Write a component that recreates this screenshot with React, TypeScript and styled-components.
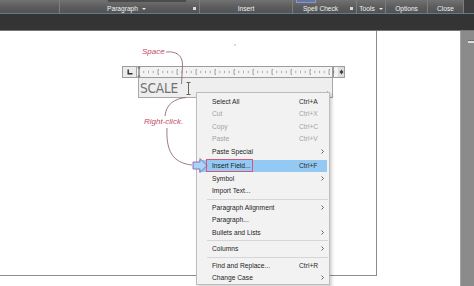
import React from "react";
import styled, { createGlobalStyle } from "styled-components";

const Global = createGlobalStyle`
  html, body { margin: 0; padding: 0; background: #ffffff; overflow: hidden; }
  body { width: 474px; height: 286px; font-family: "Liberation Sans", Arial, sans-serif; }
`;

const Screen = styled.div`
  width: 474px;
  height: 286px;
  display: flex;
  flex-direction: column;
  overflow: hidden;
  background: #ffffff;
`;

/* ---------- ribbon ---------- */
const Ribbon = styled.div`
  height: 13px;
  flex: none;
  display: flex;
  border-bottom: 1px solid #5b7c95;
  background: linear-gradient(#727272, #5c5c5c 55%, #535353);
`;

const Group = styled.div<{ $w: number; $dark?: boolean; $noSep?: boolean }>`
  width: ${(p) => p.$w}px;
  flex: none;
  position: relative;
  box-sizing: border-box;
  display: flex;
  flex-direction: column;
  border-right: 1px solid ${(p) => (p.$noSep ? "transparent" : "#7d7d7d")};
  background: ${(p) => (p.$dark ? "#3f3f3f" : "transparent")};
`;

const GroupTop = styled.div`
  height: 4px;
  flex: none;
  display: flex;
  align-items: flex-start;
`;

const Remnant = styled.div<{ $left: number; $w: number; $blue?: boolean }>`
  margin-left: ${(p) => p.$left}px;
  width: ${(p) => p.$w}px;
  height: 3px;
  box-sizing: border-box;
  background: ${(p) => (p.$blue ? "#6774a6" : "#4b4b4b")};
  border: 1px solid ${(p) => (p.$blue ? "#8a96c4" : "#6a6a6a")};
  border-top: none;
`;

const GroupLabel = styled.div<{ $shift?: number }>`
  flex: 1;
  display: flex;
  align-items: center;
  justify-content: center;
  padding-top: 1px;
  padding-right: ${(p) => p.$shift ?? 0}px;
  font-size: 6.6px;
  line-height: 8px;
  color: #f2f2f2;
  white-space: nowrap;
`;

const Caret = styled.span`
  width: 0;
  height: 0;
  margin-left: 4px;
  border-left: 2px solid transparent;
  border-right: 2px solid transparent;
  border-top: 2px solid #e8e8e8;
`;

const Launcher = styled.span`
  position: absolute;
  right: 3px;
  bottom: 3px;
  width: 3px;
  height: 3px;
  background: #d8d8d8;
`;

const DarkBand = styled.div`
  height: 16px;
  flex: none;
  background: #343434;
  border-bottom: 1px solid #777777;
`;

/* ---------- workspace ---------- */
const Workspace = styled.div`
  flex: 1;
  display: flex;
  position: relative;
  background: #ffffff;
`;

const Page = styled.div`
  width: 377px;
  height: 245px;
  flex: none;
  box-sizing: border-box;
  background: #ffffff;
  border-right: 1px solid #8c8c8c;
  border-bottom: 1px solid #8c8c8c;
`;

const Gutter = styled.div`
  flex: 1;
  background: #ffffff;
`;

const ScrollPanel = styled.div`
  width: 14px;
  flex: none;
  box-sizing: border-box;
  background: #8b8b8b;
  border-left: 1px solid #a3a3a3;
  padding: 9px 0 0 7px;
`;

const ScrollDash = styled.div`
  width: 7px;
  height: 2px;
  background: #dcdcdc;
  border-top: 1px solid #6c6c6c;
`;

/* ---------- mtext editor on the canvas ---------- */
const Ruler = styled.div`
  position: absolute;
  left: 122px;
  top: 35px;
  width: 223px;
  height: 12px;
  box-sizing: border-box;
  display: flex;
  background: #dedede;
  border: 1px solid #9c9c9c;
`;

const TabBox = styled.div`
  width: 14px;
  flex: none;
  box-sizing: border-box;
  display: flex;
  align-items: center;
  justify-content: center;
  background: #ececec;
  border-right: 1px solid #a8a8a8;
`;

const RulerStrip = styled.div`
  flex: 1;
  background: #f3f3f3;
  display: flex;
`;

const RulerEnd = styled.div`
  width: 6px;
  flex: none;
  display: flex;
  align-items: center;
  justify-content: center;
`;

const TextBox = styled.div`
  position: absolute;
  left: 138px;
  top: 47px;
  width: 195px;
  height: 20px;
  box-sizing: border-box;
  display: flex;
  align-items: center;
  padding: 1px 0 0 1px;
  background: #eeeeee;
  border: 1px solid #a8a8a8;
  border-top: none;
`;

const ScaleText = styled.span`
  font-family: "DejaVu Sans Condensed", "DejaVu Sans", sans-serif;
  font-size: 13.5px;
  line-height: 16px;
  color: #727272;
  letter-spacing: -0.2px;
`;

const Caret2 = styled.svg`
  margin-left: 8px;
  flex: none;
`;

const ResizeGrip = styled.div`
  position: absolute;
  right: 0;
  bottom: 0;
  width: 4px;
  height: 6px;
  border-left: 1px solid #b0b0b0;
`;

/* ---------- annotations ---------- */
const Overlay = styled.svg`
  position: absolute;
  left: 0;
  top: 0;
  width: 474px;
  height: 255px;
  pointer-events: none;
  z-index: 3;
`;

const Note = styled.span<{ $x: number; $y: number }>`
  position: absolute;
  left: ${(p) => p.$x}px;
  top: ${(p) => p.$y}px;
  font-size: 8px;
  line-height: 10px;
  font-style: italic;
  color: #c24a63;
  white-space: nowrap;
  z-index: 3;
`;

const FocusBox = styled.div`
  position: absolute;
  left: 206px;
  top: 128px;
  width: 47px;
  height: 13px;
  box-sizing: border-box;
  border: 1px solid #d4587c;
  z-index: 4;
`;

/* ---------- context menu ---------- */
const Menu = styled.div`
  position: absolute;
  left: 196px;
  top: 61px;
  width: 134px;
  box-sizing: border-box;
  padding-top: 2px;
  background: #f2f2f2;
  border: 1px solid #bcbcbc;
  box-shadow: 2px 2px 3px rgba(0, 0, 0, 0.18);
  z-index: 2;
`;

const Item = styled.div<{ $active?: boolean; $gap?: number }>`
  height: 12.5px;
  margin: ${(p) => p.$gap ?? 0}px 2px 0 2px;
  padding-left: 13px;
  display: grid;
  grid-template-columns: 87px 22px 1fr;
  align-items: center;
  font-size: 6.7px;
  color: #1e1e1e;
  background: ${(p) => (p.$active ? "#93c9f2" : "transparent")};
  white-space: nowrap;
`;

const ItemLabel = styled.span<{ $off?: boolean }>`
  color: ${(p) => (p.$off ? "#a3a3a3" : "#1e1e1e")};
`;

const Shortcut = styled.span<{ $off?: boolean }>`
  color: ${(p) => (p.$off ? "#a3a3a3" : "#2a2a2a")};
`;

const SubArrow = styled.svg`
  justify-self: start;
`;

const Sep = styled.div`
  height: 4px;
  margin-left: 10px;
  margin-right: 1px;
  display: flex;
  align-items: center;
  &::after {
    content: "";
    flex: 1;
    height: 1px;
    background: #d6d6d6;
  }
`;

type Entry =
  | { sep: true }
  | { label: string; key?: string; sub?: boolean; off?: boolean; active?: boolean; gap?: number };

const entries: Entry[] = [
  { label: "Select All", key: "Ctrl+A" },
  { label: "Cut", key: "Ctrl+X", off: true },
  { label: "Copy", key: "Ctrl+C", off: true },
  { label: "Paste", key: "Ctrl+V", off: true },
  { label: "Paste Special", sub: true },
  { label: "Insert Field...", key: "Ctrl+F", active: true, gap: 2 },
  { label: "Symbol", sub: true },
  { label: "Import Text..." },
  { sep: true },
  { label: "Paragraph Alignment", sub: true },
  { label: "Paragraph..." },
  { label: "Bullets and Lists", sub: true },
  { sep: true },
  { label: "Columns", sub: true },
  { sep: true },
  { label: "Find and Replace...", key: "Ctrl+R" },
  { label: "Change Case", sub: true },
];

function Ticks() {
  const n = 42;
  return (
    <svg width="201" height="10" viewBox="0 0 201 10">
      {Array.from({ length: n }, (_, i) => {
        const x = 2 + i * 4.75;
        if (i === 0) return null;
        const major = i % 4 === 0;
        return major ? (
          <path key={i} d={`M${x} 2.5 V7.5 M${x} 2.5 h1 M${x} 7.5 h1`} stroke="#8a8a8a" strokeWidth="0.8" fill="none" />
        ) : (
          <line key={i} x1={x} y1="3.8" x2={x} y2="6.2" stroke="#9a9a9a" strokeWidth="0.8" />
        );
      })}
      <path d="M2 0.5 V9.5 M0.8 0.8 H3.2 M0.8 9.2 H3.2" stroke="#333" strokeWidth="0.8" fill="none" />
      <path d="M196 0 V10" stroke="#333" strokeWidth="0.9" fill="none" />
    </svg>
  );
}

export default function App() {
  return (
    <Screen>
      <Global />
      <Ribbon>
        <Group $w={60}>
          <GroupTop />
          <GroupLabel />
        </Group>
        <Group $w={140}>
          <GroupTop>
            <Remnant $left={47} $w={80} />
          </GroupTop>
          <GroupLabel $shift={6}>
            Paragraph
            <Caret />
          </GroupLabel>
          <Launcher />
        </Group>
        <Group $w={93}>
          <GroupTop />
          <GroupLabel>Insert</GroupLabel>
        </Group>
        <Group $w={64}>
          <GroupTop>
            <Remnant $left={3} $w={20} $blue />
          </GroupTop>
          <GroupLabel $shift={8}>Spell Check</GroupLabel>
          <Launcher />
        </Group>
        <Group $w={29}>
          <GroupTop />
          <GroupLabel>
            Tools
            <Caret />
          </GroupLabel>
        </Group>
        <Group $w={42}>
          <GroupTop />
          <GroupLabel>Options</GroupLabel>
        </Group>
        <Group $w={36}>
          <GroupTop />
          <GroupLabel>Close</GroupLabel>
        </Group>
        <Group $w={10} $dark $noSep>
          <GroupTop />
          <GroupLabel />
        </Group>
      </Ribbon>
      <DarkBand />
      <Workspace>
        <Page />
        <Gutter />
        <ScrollPanel>
          <ScrollDash />
        </ScrollPanel>

        <Ruler>
          <TabBox>
            <svg width="6" height="6" viewBox="0 0 6 6">
              <path d="M1.2 0.5 V4.8 H5.5" stroke="#2e2e2e" strokeWidth="1.4" fill="none" />
            </svg>
          </TabBox>
          <RulerStrip>
            <Ticks />
          </RulerStrip>
          <RulerEnd>
            <svg width="5" height="6" viewBox="0 0 5 6">
              <path d="M2.5 0.5 L4.5 3 L2.5 5.5 L0.5 3 Z" fill="#444" />
            </svg>
          </RulerEnd>
        </Ruler>

        <TextBox>
          <ScaleText>SCALE</ScaleText>
          <Caret2 width="5" height="13" viewBox="0 0 5 13">
            <path d="M0.5 0.5 H4.5 M2.5 0.5 V12.5 M0.5 12.5 H4.5" stroke="#555" strokeWidth="0.9" fill="none" />
          </Caret2>
          <ResizeGrip />
        </TextBox>

        <Menu>
          {entries.map((e, i) =>
            "sep" in e ? (
              <Sep key={i} />
            ) : (
              <Item key={i} $active={e.active} $gap={e.gap}>
                <ItemLabel $off={e.off}>{e.label}</ItemLabel>
                <Shortcut $off={e.off}>{e.key ?? ""}</Shortcut>
                {e.sub ? (
                  <SubArrow width="3" height="5" viewBox="0 0 3 5">
                    <path d="M0.5 0.5 L2.5 2.5 L0.5 4.5" stroke="#444" strokeWidth="0.8" fill="none" />
                  </SubArrow>
                ) : (
                  <span />
                )}
              </Item>
            )
          )}
        </Menu>

        <Note $x={142} $y={16}>Space</Note>
        <Note $x={144} $y={86}>Right-click.</Note>
        <FocusBox />
        <Overlay viewBox="0 31 474 255">
          <path d="M166 52 C176 51 183 55 182.5 66 L181.5 84" stroke="#93697d" strokeWidth="0.9" fill="none" />
          <path d="M186 97.5 C175 98.5 166 104 165 116" stroke="#93697d" strokeWidth="0.9" fill="none" />
          <path d="M167 128 C166 150 172 163 192 165" stroke="#93697d" strokeWidth="0.9" fill="none" />
          <circle cx="235" cy="45" r="0.7" fill="#9a9a9a" />
          <path
            d="M193 162 H200 V158.5 L207 165.5 L200 172.5 V169 H193 Z"
            fill="#a9d4f6"
            stroke="#8467b0"
            strokeWidth="0.9"
          />
        </Overlay>
      </Workspace>
    </Screen>
  );
}
